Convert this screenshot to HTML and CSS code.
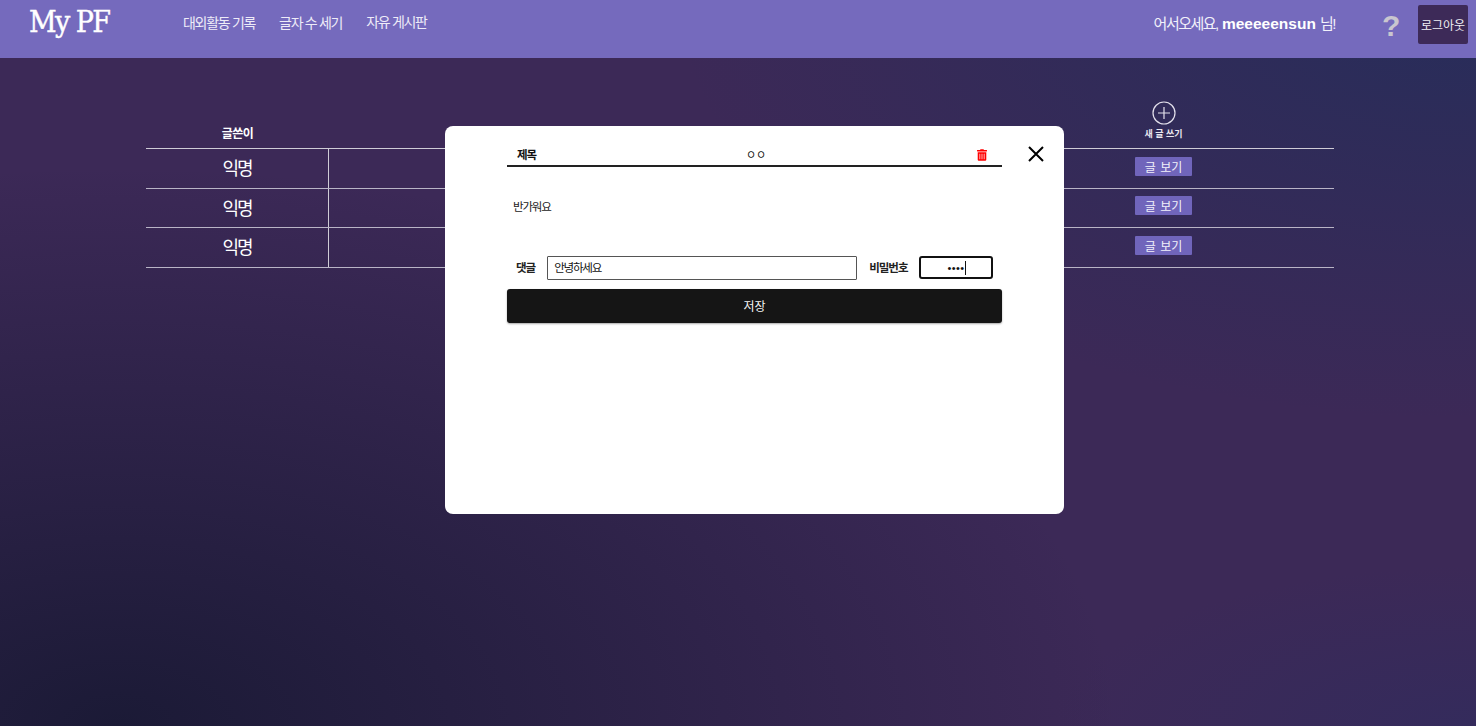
FILE: index.html
```html
<!DOCTYPE html>
<html lang="ko">
<head>
<meta charset="utf-8">
<title>My PF</title>
<link rel="stylesheet" href="styles.css">
</head>
<body>
<header class="topbar">
  <div class="logo">My PF</div>
  <nav class="nav">
    <a class="nav-link">대외활동 기록</a>
    <a class="nav-link">글자 수 세기</a>
    <a class="nav-link nav-link-up">자유 게시판</a>
  </nav>
  <div class="user">
    <span class="welcome">어서오세요, <b>meeeeensun</b> 님!</span>
    <span class="help">?</span>
    <button class="logout">로그아웃</button>
  </div>
</header>
<main class="board">
  <div class="grid head">
    <div class="cell th">글쓴이</div>
    <div class="cell"></div>
    <div class="cell new">
      <svg class="plus" width="24" height="24" viewBox="0 0 24 24"><circle cx="12" cy="12" r="11" fill="none" stroke="#e4e1ec" stroke-width="1.2"/><path d="M12 6v12M6 12h12" stroke="#e4e1ec" stroke-width="1.2"/></svg>
      <span class="new-label">새 글 쓰기</span>
    </div>
  </div>
  <div class="grid row">
    <div class="cell name">익명</div>
    <div class="cell"></div>
    <div class="cell"><button class="view">글 보기</button></div>
  </div>
  <div class="grid row">
    <div class="cell name">익명</div>
    <div class="cell"></div>
    <div class="cell"><button class="view">글 보기</button></div>
  </div>
  <div class="grid row">
    <div class="cell name">익명</div>
    <div class="cell"></div>
    <div class="cell"><button class="view">글 보기</button></div>
  </div>
</main>
<section class="modal">
  <button class="close" aria-label="닫기">
    <svg width="16" height="16" viewBox="0 0 16 16"><path d="M1 1l14 14M15 1L1 15" stroke="#000" stroke-width="2"/></svg>
  </button>
  <div class="form">
    <div class="title-row">
      <b class="title-label">제목</b>
      <span class="title-value">ㅇㅇ</span>
      <svg class="trash" width="10" height="12" viewBox="0 0 448 512"><path fill="#f00" d="M32 464a48 48 0 0 0 48 48h288a48 48 0 0 0 48-48V128H32zm272-256a16 16 0 0 1 32 0v224a16 16 0 0 1-32 0zm-96 0a16 16 0 0 1 32 0v224a16 16 0 0 1-32 0zm-96 0a16 16 0 0 1 32 0v224a16 16 0 0 1-32 0zM432 32H312l-9-19a24 24 0 0 0-22-13H167a24 24 0 0 0-21 13l-9 19H16A16 16 0 0 0 0 48v32a16 16 0 0 0 16 16h416a16 16 0 0 0 16-16V48a16 16 0 0 0-16-16z"/></svg>
    </div>
    <p class="content">반가워요</p>
    <div class="comment-row">
      <b class="field-label">댓글</b>
      <input class="comment" type="text" value="안녕하세요">
      <b class="field-label pw-label">비밀번호</b>
      <div class="pw"><span class="dots">••••</span><span class="caret"></span></div>
    </div>
    <button class="save">저장</button>
  </div>
</section>
</body>
</html>
```
FILE: styles.css
```css
* { box-sizing: border-box; }
html, body { height: 100%; }
body {
  margin: 0;
  height: 726px;
  overflow: hidden;
  position: relative;
  font-family: "Liberation Sans", "Noto Sans CJK KR", sans-serif;
  color: #fff;
  background:
    radial-gradient(ellipse 1000px 560px at 8% 100%, #1b1a36 0%, rgba(27,26,54,0) 100%),
    radial-gradient(ellipse 800px 420px at 100% 0%, #272d5a 0%, rgba(39,45,90,0) 100%),
    radial-gradient(ellipse 420px 160px at 100% 100%, #342b5c 0%, rgba(52,43,92,0) 100%),
    #3c2957;
}
.topbar {
  height: 58px;
  background: #756abd;
  display: flex;
  align-items: flex-start;
}
.logo {
  font-family: "DejaVu Serif Condensed", "DejaVu Serif", serif;
  font-stretch: condensed;
  font-size: 30px;
  font-weight: 500;
  line-height: 34px;
  margin: 5px 0 0 29px;
  width: 154px;
  letter-spacing: -1.6px;
  white-space: nowrap;
  -webkit-text-stroke: .4px #fff;
}
.nav { display: flex; gap: 24px; padding-top: 13px; }
.nav-link { font-size: 14px; line-height: 20px; color: #eeecf8; letter-spacing: -1.3px; }
.nav-link-up { position: relative; top: -1px; }
.user { margin-left: auto; display: flex; align-items: flex-start; }
.welcome { font-size: 15px; line-height: 20px; margin-top: 14px; color: #f2f1fa; letter-spacing: -1.5px; word-spacing: 1.5px; }
.welcome b { font-size: 15.5px; color: #fff; letter-spacing: 0; }
.help {
  font-size: 30px;
  font-weight: bold;
  line-height: 32px;
  color: #c9c6cf;
  margin: 10px 0 0 47px;
  width: 16px;
  text-align: center;
}
.logout {
  width: 50px;
  height: 39px;
  margin: 5px 8px 0 20px;
  padding: 0;
  border: 0;
  border-radius: 2px;
  background: #3d2a58;
  color: #f1f0f5;
  font: 12px "Noto Sans CJK KR", sans-serif;
}
.board { width: 1188px; margin: 43px 0 0 146px; }
.grid { display: grid; grid-template-columns: 183px 1fr 341px; }
.head { height: 48px; border-bottom: 1px solid #cfccd6; }
.row { height: 39.5px; border-bottom: 1px solid #b9b4c6; }
.cell { display: flex; align-items: center; justify-content: center; min-height: 0; }
.th { align-items: flex-end; padding-bottom: 5px; font-size: 12px; font-weight: bold; line-height: 18px; letter-spacing: -.6px; }
.new { flex-direction: column; justify-content: flex-end; padding: 0 0 7px 0; }
.plus { display: block; margin-bottom: 3px; }
.new-label { font-size: 9px; font-weight: bold; line-height: 13px; color: #e9e8f0; }
.name { font-size: 18px; line-height: 24px; letter-spacing: -2px; padding-top: 2px; border-right: 1px solid #cfccd6; }
.view {
  width: 57px;
  height: 19px;
  padding: 0;
  border: 0;
  margin-top: -4px;
  border-radius: 1px;
  background: #7065bb;
  color: #f2f1fa;
  font: 12px "Noto Sans CJK KR", sans-serif;
  word-spacing: 1px;
}
.modal {
  position: absolute;
  left: 445px;
  top: 126px;
  width: 619px;
  height: 388px;
  background: #fff;
  border-radius: 8px;
  color: #111;
  padding: 18px 62px 0;
}
.close {
  position: absolute;
  right: 20px;
  top: 20px;
  width: 16px;
  height: 16px;
  padding: 0;
  border: 0;
  background: none;
  display: flex;
}
.form { width: 495px; }
.title-row {
  display: flex;
  align-items: center;
  height: 23px;
  border-bottom: 2px solid #222;
  font-size: 11.5px;
}
.title-label { margin-left: 10px; width: 229px; flex: none; line-height: 20px; letter-spacing: -1px; }
.title-value { font-size: 11px; width: 231px; flex: none; line-height: 20px; }
.trash { display: block; margin-top: 1px; flex: none; }
.content { margin: 0; padding: 31px 0 0 6px; height: 89px; font-size: 11.5px; line-height: 18px; color: #222; letter-spacing: -1.2px; }
.comment-row { display: flex; align-items: flex-start; height: 24px; }
.field-label { font-size: 11.5px; line-height: 24px; color: #222; flex: none; white-space: nowrap; letter-spacing: -1px; }
.field-label:first-child { margin-left: 9px; }
.comment {
  flex: none;
  width: 310px;
  height: 24px;
  margin-left: 12px;
  padding: 0 6px 2px;
  border: 1px solid #555;
  border-radius: 1px;
  font: 11.5px "Noto Sans CJK KR", sans-serif;
  letter-spacing: -1.2px;
  color: #111;
  outline: 0;
}
.pw-label { margin-left: 12px; }
.pw {
  flex: none;
  width: 74px;
  height: 23px;
  margin-left: 11px;
  border: 2px solid #111;
  border-radius: 3px;
  display: flex;
  align-items: center;
  justify-content: flex-end;
  padding-right: 25px;
  font-size: 11px;
}
.dots { line-height: 12px; letter-spacing: .4px; }
.caret { width: 1px; height: 14px; background: #111; }
.save {
  display: block;
  width: 495px;
  height: 34px;
  margin-top: 9px;
  padding: 0 0 2px;
  border: 0;
  border-radius: 3px;
  background: #151515;
  color: #f4f4f4;
  font: 12px "Noto Sans CJK KR", sans-serif;
  box-shadow: 0 1px 2px rgba(0,0,0,.35);
}
```
